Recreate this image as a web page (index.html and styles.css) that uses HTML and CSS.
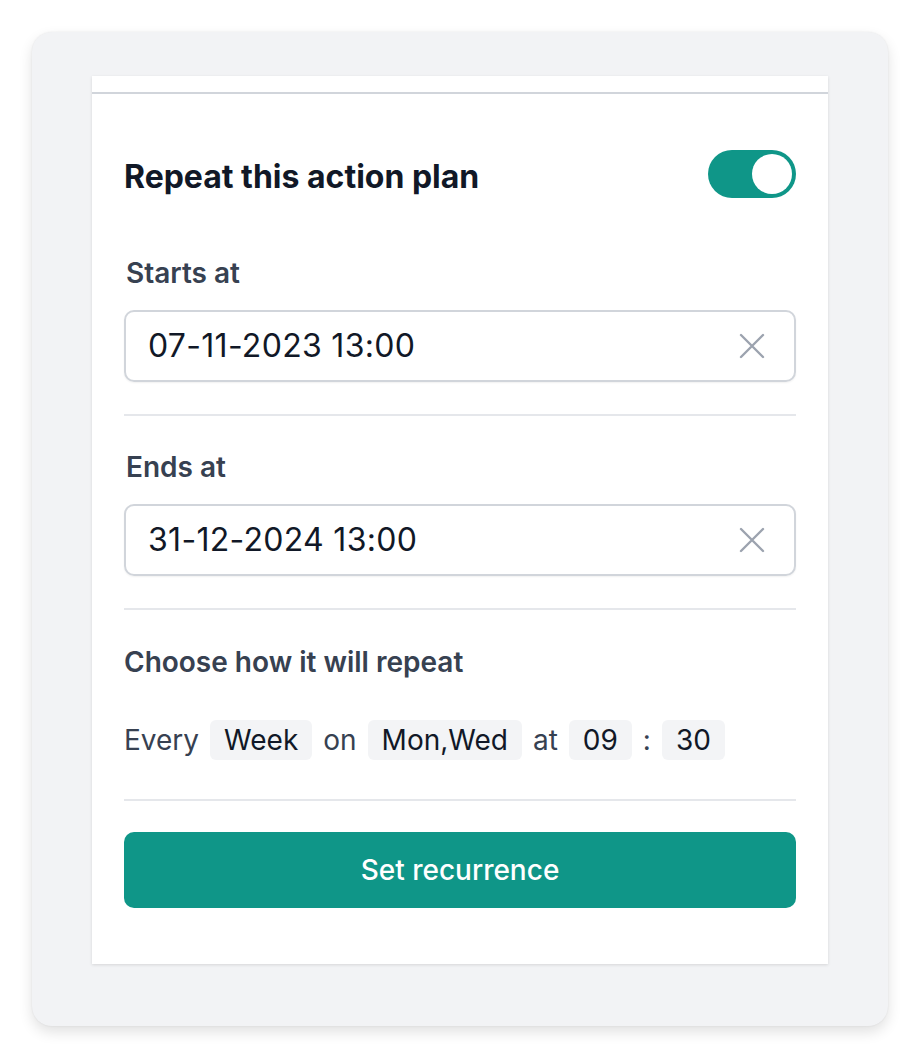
FILE: index.html
```html
<!DOCTYPE html>
<html>
<head>
<meta charset="utf-8">
<link rel="stylesheet" href="styles.css">
</head>
<body>
<div class="panel">
  <div class="card">
    <div class="card-top"></div>
    <div class="content">
      <div class="head-row">
        <h2 class="title">Repeat this action plan</h2>
        <div class="toggle"><span class="knob"></span></div>
      </div>
      <div class="field first">
        <div class="label">Starts at</div>
        <div class="input">
          <span class="value">07-11-2023 13:00</span>
          <svg class="clear" width="28" height="28" viewBox="0 0 28 28"><path d="M3 3L25 25M25 3L3 25" stroke="#9ca3af" stroke-width="2.4" stroke-linecap="round" fill="none"/></svg>
        </div>
      </div>
      <div class="divider"></div>
      <div class="field">
        <div class="label">Ends at</div>
        <div class="input">
          <span class="value">31-12-2024 13:00</span>
          <svg class="clear" width="28" height="28" viewBox="0 0 28 28"><path d="M3 3L25 25M25 3L3 25" stroke="#9ca3af" stroke-width="2.4" stroke-linecap="round" fill="none"/></svg>
        </div>
      </div>
      <div class="divider"></div>
      <div class="repeat">
        <div class="sub">Choose how it will repeat</div>
        <div class="rule-row">
          <span class="word">Every</span>
          <span class="chip">Week</span>
          <span class="word">on</span>
          <span class="chip">Mon,Wed</span>
          <span class="word">at</span>
          <span class="chip">09</span>
          <span class="word colon">:</span>
          <span class="chip">30</span>
        </div>
      </div>
      <div class="divider d3"></div>
      <button class="submit">Set recurrence</button>
    </div>
  </div>
</div>
</body>
</html>
```
FILE: styles.css
```css
* { box-sizing: border-box; }
html, body { margin: 0; padding: 0; background: #ffffff; }
body {
  font-family: Inter, "Noto Sans", sans-serif;
  padding: 32px 32px 32px 32px;
}
.panel {
  background: #f2f3f5;
  border-radius: 20px;
  padding: 44px 60px 62px 60px;
  box-shadow: 0 6px 14px rgba(0,0,0,0.12), 0 0 2px rgba(0,0,0,0.08);
  height: 994px;
}
.card {
  background: #ffffff;
  box-shadow: 0 1px 3px rgba(0,0,0,0.12);
}
.card-top {
  height: 18px;
  border-bottom: 2px solid #d1d5db;
}
.content {
  padding: 56px 32px 56px 32px;
}
.head-row {
  display: flex;
  align-items: center;
  justify-content: space-between;
  height: 48px;
}
.title {
  margin: 0;
  font-size: 32px;
  font-weight: 700;
  color: #111827;
  line-height: 40px;
  padding-top: 5px;
  letter-spacing: 0;
}
.toggle {
  width: 88px;
  height: 48px;
  border-radius: 24px;
  background: #0f9688;
  display: flex;
  justify-content: flex-end;
  align-items: center;
  padding: 4px;
}
.knob {
  width: 40px;
  height: 40px;
  border-radius: 50%;
  background: #ffffff;
}
.field { padding-top: 35px; }
.field.first { padding-top: 59px; }
.label {
  font-size: 28px;
  font-weight: 600;
  color: #374151;
  line-height: 32px;
  padding-left: 2px;
  margin-bottom: 21px;
}
.input {
  height: 72px;
  border: 2px solid #d1d5db;
  border-radius: 10px;
  display: flex;
  align-items: center;
  justify-content: space-between;
  padding: 0 28px 0 22px;
  box-shadow: 0 1px 2px rgba(0,0,0,0.06);
}
.value {
  font-size: 32px;
  color: #111827;
  line-height: 36px;
  letter-spacing: 0.3px;
}
.clear { display: block; }
.divider {
  height: 2px;
  background: #e5e7eb;
  margin-top: 32px;
}
.repeat { padding-top: 36px; }
.sub {
  font-size: 28px;
  font-weight: 600;
  color: #374151;
  line-height: 32px;
  margin-bottom: 42px;
}
.rule-row {
  display: flex;
  align-items: center;
  gap: 11px;
  height: 40px;
}
.word {
  font-size: 28px;
  color: #374151;
}
.chip {
  background: #f3f4f6;
  border-radius: 6px;
  height: 40px;
  display: flex;
  align-items: center;
  padding: 0 14px;
  font-size: 28px;
  color: #111827;
}
.divider.d3 { margin-top: 39px; }
.submit {
  display: block;
  width: 100%;
  height: 76px;
  margin-top: 31px;
  border: none;
  border-radius: 10px;
  background: #0f9688;
  color: #ffffff;
  font-family: Inter, "Noto Sans", sans-serif;
  font-size: 28px;
  font-weight: 500;
}
```
